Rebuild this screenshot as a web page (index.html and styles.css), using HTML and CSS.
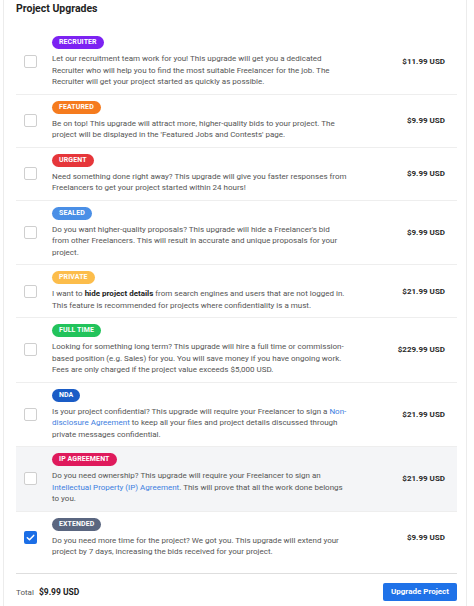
FILE: index.html
```html
<!DOCTYPE html>
<html>
<head>
<meta charset="utf-8">
<link rel="stylesheet" href="styles.css">
</head>
<body>
<div class="card">
  <h2 class="title">Project Upgrades</h2>
  <ul class="list">
    <li class="row">
      <span class="check"></span>
      <div class="body">
        <span class="badge b-recruiter">Recruiter</span>
        <p class="desc">Let our recruitment team work for you! This upgrade will get you a dedicated Recruiter who will help you to find the most suitable Freelancer for the job. The Recruiter will get your project started as quickly as possible.</p>
      </div>
      <span class="price">$11.99 USD</span>
    </li>
    <li class="row">
      <span class="check"></span>
      <div class="body">
        <span class="badge b-featured">Featured</span>
        <p class="desc">Be on top! This upgrade will attract more, higher-quality bids to your project. The project will be displayed in the 'Featured Jobs and Contests' page.</p>
      </div>
      <span class="price">$9.99 USD</span>
    </li>
    <li class="row">
      <span class="check"></span>
      <div class="body">
        <span class="badge b-urgent">Urgent</span>
        <p class="desc">Need something done right away? This upgrade will give you faster responses from Freelancers to get your project started within 24 hours!</p>
      </div>
      <span class="price">$9.99 USD</span>
    </li>
    <li class="row">
      <span class="check"></span>
      <div class="body">
        <span class="badge b-sealed">Sealed</span>
        <p class="desc">Do you want higher-quality proposals? This upgrade will hide a Freelancer's bid from&nbsp;other Freelancers. This will result in accurate and unique proposals for your project.</p>
      </div>
      <span class="price">$9.99 USD</span>
    </li>
    <li class="row">
      <span class="check"></span>
      <div class="body">
        <span class="badge b-private">Private</span>
        <p class="desc">I want to <strong>hide project details</strong> from search engines and users that are not logged in. This feature is recommended for projects where confidentiality is a must.</p>
      </div>
      <span class="price">$21.99 USD</span>
    </li>
    <li class="row">
      <span class="check"></span>
      <div class="body">
        <span class="badge b-fulltime">Full Time</span>
        <p class="desc">Looking for something long term? This upgrade will hire a full time or commission-based position (e.g. Sales) for you. You will save money if you have ongoing work. Fees are only charged if the project value exceeds $5,000 USD.</p>
      </div>
      <span class="price">$229.99 USD</span>
    </li>
    <li class="row">
      <span class="check"></span>
      <div class="body">
        <span class="badge b-nda">NDA</span>
        <p class="desc">Is your project confidential? This upgrade will require your Freelancer to sign a <a class="link">Non-disclosure Agreement</a> to keep all your files and project details discussed through private messages confidential.</p>
      </div>
      <span class="price">$21.99 USD</span>
    </li>
    <li class="row row-hover">
      <span class="check"></span>
      <div class="body">
        <span class="badge b-ip">IP Agreement</span>
        <p class="desc">Do you need ownership? This upgrade will require your Freelancer to sign an <a class="link">Intellectual Property (IP) Agreement</a>. This will prove that all the work done belongs to you.</p>
      </div>
      <span class="price">$21.99 USD</span>
    </li>
    <li class="row row-last">
      <span class="check checked"><svg viewBox="0 0 13 13" width="13" height="13"><path d="M3.3 6.7 L5.5 8.8 L9.7 4.4" fill="none" stroke="#fff" stroke-width="1.5" stroke-linecap="round" stroke-linejoin="round"/></svg></span>
      <div class="body">
        <span class="badge b-extended">Extended</span>
        <p class="desc">Do you need more time for the project? We got you. This upgrade will extend your project by 7 days, increasing the bids received for your project.</p>
      </div>
      <span class="price">$9.99 USD</span>
    </li>
  </ul>
  <div class="footer">
    <div class="total"><span class="total-label">Total</span><span class="total-value">$9.99 USD</span></div>
    <button class="btn">Upgrade Project</button>
  </div>
</div>
</body>
</html>
```
FILE: styles.css
```css
html, body {
  margin: 0;
  padding: 0;
  background: #ffffff;
}
body {
  font-family: Roboto, "Liberation Sans", Arial, sans-serif;
  color: #4f4f4f;
}
.card {
  margin-left: 3px;
  width: 441px;
  height: 606px;
  border-left: 1px solid #ececec;
  border-right: 1px solid #ececec;
  padding: 0 9px 0 12px;
  box-sizing: content-box;
  overflow: hidden;
}
.title {
  margin: 0 0 14px 0;
  padding-top: 1px;
  font-size: 10.5px;
  line-height: 15px;
  font-weight: 700;
  color: #1f1f1f;
}
.list {
  list-style: none;
  margin: 0;
  padding: 0;
}
.row {
  display: flex;
  align-items: center;
  padding: 6px 12px 6px 8px;
  border-bottom: 1px solid #eeeeee;
}
.row-hover {
  background: #f4f5f7;
}
.row-last {
  border-bottom: none;
}
.check {
  flex: none;
  width: 11px;
  height: 11px;
  border: 1px solid #cfcfcf;
  border-radius: 2px;
  background: #fff;
  margin-right: 15px;
  display: flex;
}
.check.checked {
  width: 13px;
  height: 13px;
  border: none;
  background: #1b6ee6;
}
.body {
  width: 298px;
  display: flex;
  flex-direction: column;
  align-items: flex-start;
}
.badge {
  display: inline-block;
  height: 13px;
  line-height: 13px;
  padding: 0 7px;
  border-radius: 7px;
  font-size: 7px;
  font-weight: 700;
  text-transform: uppercase;
  color: #fff;
  letter-spacing: 0.1px;
  margin-bottom: 4px;
}
.b-recruiter { background: #7c22f2; }
.b-featured { background: #f57b1e; }
.b-urgent { background: #e6363a; }
.b-sealed { background: #4a8fe6; }
.b-private { background: #fcbd4b; }
.b-fulltime { background: #22c35b; }
.b-nda { background: #1a5cc6; }
.b-ip { background: #df1a5c; }
.b-extended { background: #5a6680; }
.desc {
  margin: 0;
  font-size: 8px;
  line-height: 11.5px;
  color: #555555;
}
.desc strong {
  color: #222;
  font-weight: 700;
}
.link {
  color: #3d7ee0;
  text-decoration: none;
}
.price {
  margin-left: auto;
  font-size: 8px;
  font-weight: 700;
  color: #2a2a2a;
  white-space: nowrap;
}
.footer {
  margin-top: 9px;
  border-top: 1px solid #dedede;
  padding-top: 9px;
  display: flex;
  align-items: center;
  justify-content: space-between;
}
.total {
  display: flex;
  align-items: baseline;
  gap: 5px;
  font-size: 8px;
}
.total-label {
  color: #555;
}
.total-value {
  font-weight: 700;
  font-size: 8.5px;
  color: #222;
}
.btn {
  height: 18px;
  padding: 0 8px;
  border: none;
  border-radius: 2px;
  background: #1f72e8;
  color: #fff;
  font-family: Roboto, "Liberation Sans", Arial, sans-serif;
  font-size: 8px;
  font-weight: 700;
}
```
